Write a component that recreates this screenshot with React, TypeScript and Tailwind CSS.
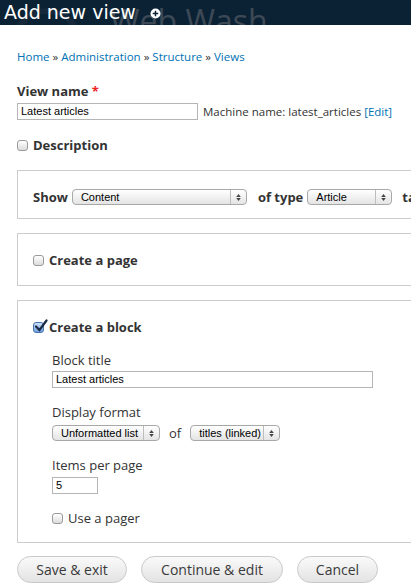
import type { ReactNode } from 'react'

const sans = "font-['Open_Sans',sans-serif]"
const label = `${sans} text-[13px] leading-4 text-[#333]`
const field = "font-['Liberation_Sans',Arial,sans-serif] text-[11px] text-black"

function Checkbox({ checked = false }: { checked?: boolean }) {
  if (checked) {
    return (
      <span className="relative inline-block h-[11px] w-[11px] shrink-0 rounded-[3px] border border-[#4a74b0] bg-gradient-to-b from-[#cfe1f7] to-[#6f9fe0]">
        <svg viewBox="0 0 14 14" className="absolute -top-[4px] left-[0px] h-[14px] w-[14px]">
          <path d="M2 7.5 L5.5 11 L12.5 1.5" fill="none" stroke="#1a2a44" strokeWidth="2.2" strokeLinecap="round" />
        </svg>
      </span>
    )
  }
  return (
    <span className="inline-block h-[11px] w-[11px] shrink-0 rounded-[3px] border border-[#9a9a9a] bg-gradient-to-b from-white to-[#dcdcdc]" />
  )
}

function Select({ value, width }: { value: string; width: string }) {
  return (
    <span
      className={`inline-flex h-[16px] ${width} shrink-0 items-stretch overflow-hidden rounded-[4px] border border-[#a8a8a8] bg-gradient-to-b from-white to-[#e4e4e4] ${field}`}
    >
      <span className="flex flex-1 items-center pl-2 leading-none whitespace-nowrap">{value}</span>
      <span className="flex w-[16px] flex-col items-center justify-center gap-[1px] border-l border-[#bdbdbd]">
        <svg viewBox="0 0 6 4" className="h-[3px] w-[5px]">
          <path d="M0 4 L3 0 L6 4 Z" fill="#444" />
        </svg>
        <svg viewBox="0 0 6 4" className="h-[3px] w-[5px]">
          <path d="M0 0 L3 4 L6 0 Z" fill="#444" />
        </svg>
      </span>
    </span>
  )
}

function TextInput({ value, width }: { value: string; width: string }) {
  return (
    <div className={`flex h-[17px] ${width} shrink-0 items-center border border-[#b5b5b5] px-[3px] ${field} leading-none`}>
      {value}
    </div>
  )
}

function Fieldset({ children, className }: { children: ReactNode; className: string }) {
  return <div className={`w-[420px] border border-[#cccccc] ${className}`}>{children}</div>
}

function Button({ children, width }: { children: ReactNode; width: string }) {
  return (
    <button
      className={`flex h-[27px] ${width} items-center justify-center rounded-full border border-[#c8c8c8] bg-gradient-to-b from-[#fafafa] to-[#e3e3e3] ${sans} text-[14px] text-[#3a3a3a]`}
    >
      {children}
    </button>
  )
}

export default function App() {
  return (
    <div className="h-[587px] w-[411px] overflow-hidden bg-white">
      <header className="relative h-[25px] overflow-hidden bg-[#0b2235]">
        <div className="absolute top-[8px] left-[12px] h-[70px] w-[70px] rounded-full border-[6px] border-[#16293a]" />
        <span className={`absolute top-[1px] left-[110px] ${sans} text-[32px] leading-[40px] text-[#3d4955]`}>Web Wash</span>
        <div className="relative flex h-full items-center gap-[14px] pl-[4px]">
          <span className="font-['DejaVu_Sans',sans-serif] text-[19px] leading-none text-white">Add new view</span>
          <svg viewBox="0 0 12 12" className="mt-[1px] h-[11px] w-[11px]">
            <circle cx="6" cy="6" r="5.5" fill="white" />
            <path d="M6 3 V9 M3 6 H9" stroke="#0b2235" strokeWidth="1.6" />
          </svg>
        </div>
      </header>

      <div className="px-[17px]">
        <nav className={`mt-[24px] ${sans} text-[11.5px] leading-4 text-[#0071b3]`}>
          Home <span className="text-[#333]">»</span> Administration <span className="text-[#333]">»</span> Structure{' '}
          <span className="text-[#333]">»</span> Views
        </nav>

        <div className={`mt-[18px] font-bold ${label}`}>
          View name <span className="text-[#e22]">*</span>
        </div>
        <div className="mt-[4px] flex items-center gap-[5px]">
          <TextInput value="Latest articles" width="w-[181px]" />
          <span className={`${sans} text-[11.5px] whitespace-nowrap text-[#333]`}>
            Machine name: latest_articles <span className="text-[#0071b3]">[Edit]</span>
          </span>
        </div>

        <div className="mt-[17px] flex items-center gap-[5px]">
          <Checkbox />
          <span className={`font-bold ${label}`}>Description</span>
        </div>

        <Fieldset className="mt-[17px] pt-[18px] pb-[13px] pl-[15px]">
          <div className="flex h-4 items-center whitespace-nowrap">
            <span className={`mr-[4px] font-bold ${label}`}>Show</span>
            <Select value="Content" width="w-[175px]" />
            <span className={`mr-[4px] ml-[11px] font-bold ${label}`}>of type</span>
            <Select value="Article" width="w-[85px]" />
            <span className={`ml-[10px] font-bold ${label}`}>tagged with</span>
          </div>
        </Fieldset>

        <Fieldset className="mt-[14px] pt-[18px] pb-[17px] pl-[15px]">
          <div className="flex h-4 items-center gap-[5px]">
            <Checkbox />
            <span className={`font-bold ${label}`}>Create a page</span>
          </div>
        </Fieldset>

        <Fieldset className="mt-[14px] pt-[18px] pb-[16px] pl-[15px]">
          <div className="flex h-4 items-center gap-[5px]">
            <Checkbox checked />
            <span className={`font-bold ${label}`}>Create a block</span>
          </div>

          <div className="pl-[19px]">
            <div className={`mt-[17px] ${label}`}>Block title</div>
            <div className="mt-[3px]">
              <TextInput value="Latest articles" width="w-[321px]" />
            </div>

            <div className={`mt-[16px] ${label}`}>Display format</div>
            <div className="mt-[5px] flex h-4 items-center">
              <Select value="Unformatted list" width="w-[108px]" />
              <span className={`mx-[9px] ${label}`}>of</span>
              <Select value="titles (linked)" width="w-[90px]" />
            </div>

            <div className={`mt-[16px] ${label}`}>Items per page</div>
            <div className="mt-[4px]">
              <TextInput value="5" width="w-[46px]" />
            </div>

            <div className="mt-[16px] flex h-4 items-center gap-[5px]">
              <Checkbox />
              <span className={label}>Use a pager</span>
            </div>
          </div>
        </Fieldset>

        <div className="mt-[13px] flex gap-[14px]">
          <Button width="w-[110px]">Save &amp; exit</Button>
          <Button width="w-[142px]">Continue &amp; edit</Button>
          <Button width="w-[81px]">Cancel</Button>
        </div>
      </div>
    </div>
  )
}
